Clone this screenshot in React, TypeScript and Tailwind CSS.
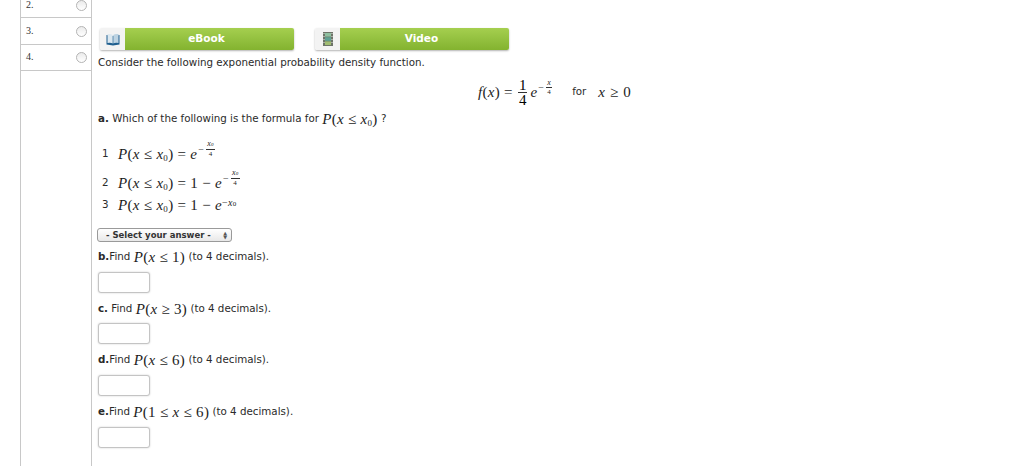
import React from "react";

const M = ({ children, className = "" }: { children: React.ReactNode; className?: string }) => (
  <span className={`font-['Liberation_Serif',serif] text-[15px] tracking-[0.3px] text-[#1c1c1c] whitespace-pre ${className}`}>{children}</span>
);
const I = ({ children }: { children: React.ReactNode }) => <i>{children}</i>;
const Sub0 = () => <span className="text-[9px] relative top-[2px]">0</span>;

const Frac = ({ top, bottom }: { top: React.ReactNode; bottom: string }) => (
  <span className="inline-flex flex-col items-center leading-none mx-[1px]">
    <span className="text-[8px] italic leading-[8px] border-b border-[#333] px-[1px]">{top}</span>
    <span className="text-[7px] leading-[8px]">{bottom}</span>
  </span>
);

const Exp = ({ frac }: { frac: React.ReactNode }) => (
  <span className="inline-flex items-center relative -top-[6px] ml-[1px]">
    <span className="text-[10px] mr-[1px]">−</span>
    {frac}
  </span>
);

const X0 = () => <span className="text-[8px] italic">x<span className="text-[5px]">0</span></span>;

const Radio = () => (
  <span className="w-[11px] h-[11px] rounded-full border border-[#b4b4b4] bg-gradient-to-b from-[#ebebeb] to-[#ffffff]" />
);

const Label = ({ n }: { n: string }) => (
  <span className="text-[10px] leading-[10px] text-[#333] font-['Liberation_Serif',serif]">{n}</span>
);

const BookIcon = () => (
  <svg width="14" height="13" viewBox="0 0 14 13">
    <path d="M0.5 2 L7 3 L13.5 2 V11.5 L7 12.5 L0.5 11.5 Z" fill="#1f5f8f" />
    <path d="M1.5 1 Q5 0.5 6.7 2 V10.5 Q5 9.5 1.5 10 Z" fill="#dce8f0" />
    <path d="M12.5 1 Q9 0.5 7.3 2 V10.5 Q9 9.5 12.5 10 Z" fill="#bdd3e2" />
  </svg>
);
const FilmIcon = () => (
  <svg width="10" height="14" viewBox="0 0 10 14">
    <rect x="0" y="0" width="10" height="14" fill="#6d7468" />
    <rect x="2" y="1" width="6" height="3.6" fill="#8fc0a0" />
    <rect x="2" y="5.2" width="6" height="3.6" fill="#5fa294" />
    <rect x="2" y="9.4" width="6" height="3.6" fill="#a0bd72" />
    <path d="M0.5 1h1v1h-1zM0.5 4h1v1h-1zM0.5 7h1v1h-1zM0.5 10h1v1h-1zM8.5 1h1v1h-1zM8.5 4h1v1h-1zM8.5 7h1v1h-1zM8.5 10h1v1h-1z" fill="#e6e6e6" />
  </svg>
);

const Btn = ({ icon, label }: { icon: React.ReactNode; label: string }) => (
  <div className="flex w-[194px] h-[22px] rounded-[2px] shadow-[0_1px_2px_rgba(0,0,0,0.3)] overflow-hidden">
    <div className="w-[25px] shrink-0 flex items-center justify-center bg-[#f3f3f3]">{icon}</div>
    <div className="flex-1 flex items-center justify-center pr-[6px] bg-gradient-to-b from-[#a5cf4f] to-[#83b32f] text-white font-bold text-[10.5px]">
      {label}
    </div>
  </div>
);

const Box = ({ className = "" }: { className?: string }) => (
  <div className={`w-[52px] h-[21px] bg-white rounded-[3px] border border-[#c4c4c4] shadow-[0_0_2px_#ccc] ${className}`} />
);

export default function App() {
  return (
    <div className="flex w-[1024px] h-[466px] overflow-hidden bg-white font-['DejaVu_Sans',sans-serif] text-[10.3px] text-[#2a2a2a] pl-[20px]">
      <div className="w-[72px] h-full shrink-0 border-l border-r border-[#c8c8c8]">
        <div className="h-[18px] border-b border-[#c8c8c8] flex justify-between pl-[5px] pr-[4px]">
          <Label n="2." />
          <Radio />
        </div>
        <div className="h-[27px] pt-[8px] border-b border-[#c8c8c8] flex justify-between pl-[5px] pr-[4px]">
          <Label n="3." />
          <Radio />
        </div>
        <div className="h-[26px] pt-[7px] border-b border-[#c8c8c8] flex justify-between pl-[5px] pr-[4px]">
          <Label n="4." />
          <Radio />
        </div>
      </div>

      <div className="flex-1 pl-[6px] pt-[28px] flex flex-col items-start">
        <div className="flex gap-[21px] ml-[2px]">
          <Btn icon={<BookIcon />} label="eBook" />
          <Btn icon={<FilmIcon />} label="Video" />
        </div>
        <div className="mt-[6px] leading-[13px]">Consider the following exponential probability density function.</div>

        <div className="mt-[9px] ml-[380px] h-[28px] flex items-center">
          <M><I>f</I>(<I>x</I>) = </M>
          <span className="inline-flex flex-col items-center font-['Liberation_Serif',serif] text-[15px] text-black leading-[14px] mx-[1px]">
            <span className="border-b border-[#333] px-[1px]">1</span>
            <span>4</span>
          </span>
          <M className="ml-[2px]"><I>e</I></M>
          <M><Exp frac={<Frac top="x" bottom="4" />} /></M>
          <span className="ml-[19px]">for</span>
          <M className="ml-[12px] tracking-[0.6px]"><I>x</I> ≥ 0</M>
        </div>

        <div className="mt-[5px] h-[16px] flex items-center">
          <b>a.</b>&nbsp;Which of the following is the formula for&nbsp;
          <M><I>P</I>(<I>x</I> ≤ <I>x</I><Sub0 />)</M>&nbsp;?
        </div>

        <div className="mt-[17px] h-[20px] flex items-center pl-[4px]">
          <span className="w-[10px]">1</span>
          <M className="ml-[6px]"><I>P</I>(<I>x</I> ≤ <I>x</I><Sub0 />) = <I>e</I><Exp frac={<Frac top={<X0 />} bottom="4" />} /></M>
        </div>
        <div className="mt-[9px] h-[20px] flex items-center pl-[4px]">
          <span className="w-[10px]">2</span>
          <M className="ml-[6px]"><I>P</I>(<I>x</I> ≤ <I>x</I><Sub0 />) = 1 − <I>e</I><Exp frac={<Frac top={<X0 />} bottom="4" />} /></M>
        </div>
        <div className="mt-[2px] h-[20px] flex items-center pl-[4px]">
          <span className="w-[10px]">3</span>
          <M className="ml-[6px]"><I>P</I>(<I>x</I> ≤ <I>x</I><Sub0 />) = 1 − <I>e</I><span className="text-[10px] relative -top-[4px]">−<I>x</I><span className="text-[7px]">0</span></span></M>
        </div>

        <div className="mt-[13px] -ml-[1px] w-[135px] h-[14px] rounded-[3px] border border-[#9a9a9a] bg-gradient-to-b from-[#ffffff] to-[#e8e8e8] flex items-center justify-between pl-[8px] pr-[4px] text-[8.5px] font-bold text-[#333]">
          <span>- Select your answer -</span>
          <span className="flex flex-col text-[5px] leading-[4px] text-[#555]"><span>▲</span><span>▼</span></span>
        </div>

        <div className="mt-[8px] h-[14px] flex items-center"><b>b.</b>Find&nbsp;<M><I>P</I>(<I>x</I> ≤ 1)</M>&nbsp;(to 4 decimals).</div>
        <Box className="mt-[8px]" />
        <div className="mt-[9px] h-[14px] flex items-center"><b>c.</b>&nbsp;Find&nbsp;<M><I>P</I>(<I>x</I> ≥ 3)</M>&nbsp;(to 4 decimals).</div>
        <Box className="mt-[7px]" />
        <div className="mt-[9px] h-[14px] flex items-center"><b>d.</b>Find&nbsp;<M><I>P</I>(<I>x</I> ≤ 6)</M>&nbsp;(to 4 decimals).</div>
        <Box className="mt-[8px]" />
        <div className="mt-[9px] h-[14px] flex items-center"><b>e.</b>Find&nbsp;<M><I>P</I>(1 ≤ <I>x</I> ≤ 6)</M>&nbsp;(to 4 decimals).</div>
        <Box className="mt-[8px]" />
      </div>
    </div>
  );
}
